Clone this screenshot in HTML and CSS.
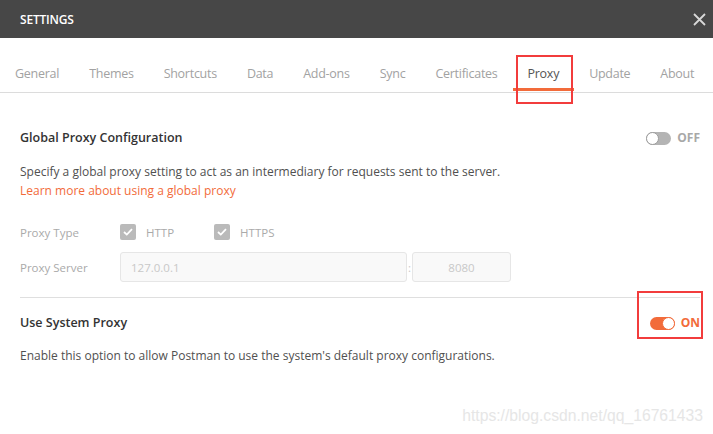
FILE: index.html
```html
<!DOCTYPE html>
<html>
<head>
<meta charset="utf-8">
<link rel="stylesheet" href="styles.css">
</head>
<body>
<div class="window">
  <header class="header">
    <span class="title">SETTINGS</span>
    <svg class="close" width="13" height="13" viewBox="0 0 13 13"><path d="M1 1L12 12M12 1L1 12" stroke="#d8d8d8" stroke-width="1.8" fill="none"/></svg>
  </header>
  <nav class="tabs">
    <span class="tab">General</span>
    <span class="tab">Themes</span>
    <span class="tab">Shortcuts</span>
    <span class="tab">Data</span>
    <span class="tab">Add-ons</span>
    <span class="tab">Sync</span>
    <span class="tab">Certificates</span>
    <span class="tab active">Proxy<span class="mark mark-tab"></span></span>
    <span class="tab">Update</span>
    <span class="tab">About</span>
  </nav>
  <main class="content">
    <section class="section">
      <div class="row-head">
        <h2 class="heading">Global Proxy Configuration</h2>
        <div class="switch off"><span class="track"><span class="knob"></span></span><span class="state">OFF</span></div>
      </div>
      <p class="desc">Specify a global proxy setting to act as an intermediary for requests sent to the server.<br><a class="link">Learn more about using a global proxy</a></p>
      <div class="field type-row">
        <span class="label">Proxy Type</span>
        <label class="opt"><span class="cb"><svg width="10" height="8" viewBox="0 0 10 8"><path d="M1 4L3.8 6.6L9 1.2" stroke="#fff" stroke-width="1.8" fill="none"/></svg></span>HTTP</label>
        <label class="opt"><span class="cb"><svg width="10" height="8" viewBox="0 0 10 8"><path d="M1 4L3.8 6.6L9 1.2" stroke="#fff" stroke-width="1.8" fill="none"/></svg></span>HTTPS</label>
      </div>
      <div class="field server-row">
        <span class="label">Proxy Server</span>
        <span class="input host">127.0.0.1</span>
        <span class="colon">:</span>
        <span class="input port">8080</span>
      </div>
    </section>
    <hr class="divider">
    <section class="section">
      <div class="row-head sys">
        <h2 class="heading">Use System Proxy</h2>
        <div class="switch on"><span class="track"><span class="knob"></span></span><span class="state">ON</span><span class="mark mark-on"></span></div>
      </div>
      <p class="desc desc2">Enable this option to allow Postman to use the system's default proxy configurations.</p>
    </section>
  </main>
  <div class="watermark">https://blog.csdn.net/qq_16761433</div>
</div>
</body>
</html>
```

FILE: styles.css
```css
* { box-sizing: border-box; }
html, body { margin: 0; padding: 0; background: #fff; }
body { font-family: "Open Sans", "Noto Sans", sans-serif; width: 713px; height: 434px; overflow: hidden; }
.window { position: relative; width: 713px; height: 434px; }

.header {
  height: 38px;
  background: #474747;
  display: flex;
  align-items: center;
  justify-content: space-between;
  padding: 0 7px 0 20px;
}
.title { color: #fff; font-size: 12px; font-weight: 600; letter-spacing: -0.2px; }
.close { display: block; }

.tabs {
  display: flex;
  height: 55px;
  padding: 27px 0 0 0;
  border-bottom: 1px solid #dcdcdc;
}
.tab {
  position: relative;
  flex: none;
  white-space: nowrap;
  padding: 0 15px;
  font-size: 12.5px;
  line-height: 18px;
  height: 27px;
  color: #a2a2a2;
  letter-spacing: -0.27px;
}
.tab.active { color: #555; }
.tab.active::after {
  content: "";
  position: absolute;
  left: 0; right: 0; bottom: 1px;
  height: 3px;
  background: #f26b3a;
}
.mark { position: absolute; border: 2px solid #f23c3c; pointer-events: none; z-index: 2; }
.mark-tab { left: 3px; top: -10px; width: 57px; height: 49px; }

.content { padding: 0 13px 0 20px; }
.row-head { display: flex; align-items: center; justify-content: space-between; margin-top: 36px; height: 18px; }
.heading { margin: 0; font-size: 12.5px; font-weight: 600; color: #333; line-height: 18px; }

.switch { position: relative; display: flex; align-items: center; }
.track { position: relative; width: 25px; height: 13px; border-radius: 7px; display: block; }
.knob { position: absolute; top: 0; width: 13px; height: 13px; border-radius: 50%; background: #fff; }
.off .track { background: #b4b4b4; }
.off .knob { left: 0; border: 1px solid #9c9c9c; }
.on .track { background: #f26b3a; }
.on .knob { right: 0; border: 1.5px solid #f26b3a; }
.state { margin-left: 6px; font-size: 12px; font-weight: 700; line-height: 18px; }
.off .state { color: #a8a8a8; }
.on .state { color: #f26b3a; }
.mark-on { left: -13px; top: -23px; width: 66px; height: 48px; }

.desc { margin: 15px 0 0; font-size: 12px; line-height: 19px; color: #505050; }
.link { color: #f26b3a; text-decoration: none; }

.field { display: flex; align-items: center; font-size: 11.5px; color: #b0b0b0; }
.label { width: 100px; flex: none; color: #aaa; }
.type-row { margin-top: 24px; height: 16px; }
.opt { display: flex; align-items: center; gap: 10px; margin-right: 40px; color: #aaa; }
.cb { width: 16px; height: 16px; border-radius: 2px; background: #bababa; display: flex; align-items: center; justify-content: center; }
.server-row { margin-top: 12px; height: 30px; }
.input { height: 30px; display: flex; align-items: center; background: #f9f9f9; border: 1px solid #e6e6e6; border-radius: 3px; color: #c8c8c8; padding: 0 10px; }
.host { width: 287px; }
.colon { width: 5px; text-align: center; color: #c8c8c8; }
.port { width: 99px; justify-content: center; }

.divider { margin: 15px 0 0; border: 0; border-top: 1px solid #dfdfdf; height: 0; }
.row-head.sys { margin-top: 16px; }
.desc2 { margin-top: 14px; }

.watermark {
  position: absolute;
  right: 10px;
  bottom: 9px;
  font-family: "Liberation Sans", Arial, sans-serif;
  font-size: 15.7px;
  color: #e6e6e6;
}
```
